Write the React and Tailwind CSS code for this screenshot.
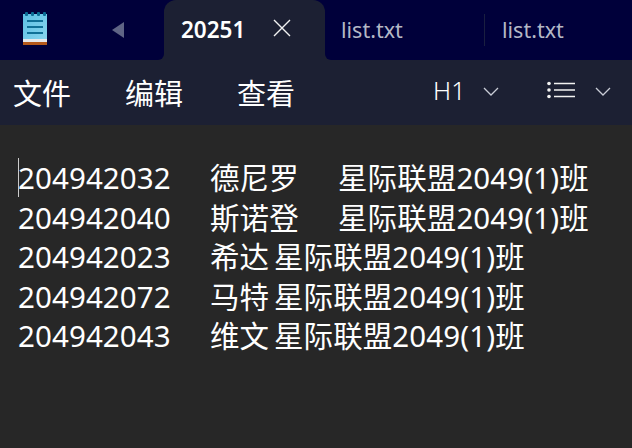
const cjk = "font-['Noto_Sans','Noto_Sans_CJK_SC',sans-serif]";

const Lines = [
  '204942032\t德尼罗\t星际联盟2049(1)班',
  '204942040\t斯诺登\t星际联盟2049(1)班',
  '204942023\t希达 星际联盟2049(1)班',
  '204942072\t马特 星际联盟2049(1)班',
  '204942043\t维文 星际联盟2049(1)班',
];

const NotepadIcon = () => (
  <svg width="26" height="34" viewBox="0 0 26 34" className="block">
    <defs>
      <linearGradient id="pad" x1="0" y1="0" x2="1" y2="1">
        <stop offset="0" stopColor="#5cc0e4" />
        <stop offset="1" stopColor="#88d4ee" />
      </linearGradient>
    </defs>
    <rect x="1" y="2" width="24" height="26" fill="url(#pad)" />
    <rect x="1" y="27" width="24" height="3" fill="#e6e8ea" />
    <rect x="1" y="30" width="24" height="3" fill="#b4591a" />
    <rect x="3" y="0" width="3" height="4" rx="1" fill="#0a6d94" />
    <rect x="9" y="0" width="3" height="4" rx="1" fill="#0a6d94" />
    <rect x="15" y="0" width="3" height="4" rx="1" fill="#0a6d94" />
    <rect x="21" y="0" width="3" height="4" rx="1" fill="#0a6d94" />
    <rect x="5" y="8" width="16" height="2" fill="#0f7097" />
    <rect x="5" y="14" width="16" height="2" fill="#0f7097" />
    <rect x="5" y="20" width="16" height="2" fill="#0f7097" />
  </svg>
);

const Chevron = () => (
  <svg width="16" height="9" viewBox="0 0 16 9" fill="none" stroke="#c9ccd6" strokeWidth="1.3" className="block">
    <path d="M1 1l7 7 7-7" />
  </svg>
);

const ListIcon = () => (
  <svg width="28" height="18" viewBox="0 0 28 18" fill="none" className="block">
    <circle cx="2" cy="2.5" r="1.8" fill="#f2f2f2" />
    <circle cx="2" cy="9" r="1.8" fill="#f2f2f2" />
    <circle cx="2" cy="15.5" r="1.8" fill="#f2f2f2" />
    <path d="M7 2.5h21M7 9h21M7 15.5h21" stroke="#f2f2f2" strokeWidth="1.4" />
  </svg>
);

export default function App() {
  return (
    <div className={`w-[632px] h-[448px] flex flex-col overflow-hidden bg-[#272727] ${cjk}`}>
      {/* tab strip */}
      <div className="h-[60px] flex bg-[#1c2033]">
        <div className="w-[164px] flex items-center bg-[#00003a] rounded-br-[6px]">
          <div className="ml-[22px] -mt-[2px]">
            <NotepadIcon />
          </div>
          <div className="ml-[64px] w-0 h-0 border-y-[8px] border-y-transparent border-r-[12px] border-r-[#5f6585]" />
        </div>
        <div className="w-[161px] bg-[#00003a]">
          <div className="h-full flex items-center pl-[17px] bg-[#1c2033] rounded-t-[12px]">
            <span className="w-[92px] text-[22.5px] font-semibold text-white">20251</span>
            <svg width="18" height="18" viewBox="0 0 18 18" fill="none" stroke="#f2f2f2" strokeWidth="1.4" className="block -mt-[4px]">
              <path d="M1 1l16 16M17 1L1 17" />
            </svg>
          </div>
        </div>
        <div className="flex-1 flex items-center bg-[#00003a] rounded-bl-[6px] text-[21.5px] text-[#b4b8c6]">
          <span className="ml-[16px] w-[143px]">list.txt</span>
          <div className="w-px h-[32px] bg-[#1a1f40]" />
          <span className="ml-[17px]">list.txt</span>
        </div>
      </div>

      {/* menu bar */}
      <div className="h-[65px] flex items-center bg-[#1c2033] text-white shrink-0">
        <div className="flex gap-[54px] pl-[13px] text-[29px] mt-[2px]">
          <span>文件</span>
          <span>编辑</span>
          <span>查看</span>
        </div>
        <span className="ml-[138px] w-[50px] text-[25px] font-light -mt-[3px]">H1</span>
        <div className="-mt-[2px]">
          <Chevron />
        </div>
        <div className="ml-[48px] -mt-[5px]">
          <ListIcon />
        </div>
        <div className="ml-[20px] -mt-[2px]">
          <Chevron />
        </div>
      </div>

      {/* editor */}
      <div className="relative flex-1 pt-[33px] pl-[18px] text-[29.5px] leading-[39.5px] text-white whitespace-pre [tab-size:64px] [word-spacing:-3px] tracking-[0.1px]">
        <div className="absolute left-[18px] top-[33px] w-px h-[39px] bg-[#cccccc]" />
        {Lines.map((line) => (
          <div key={line}>{line}</div>
        ))}
      </div>
    </div>
  );
}
